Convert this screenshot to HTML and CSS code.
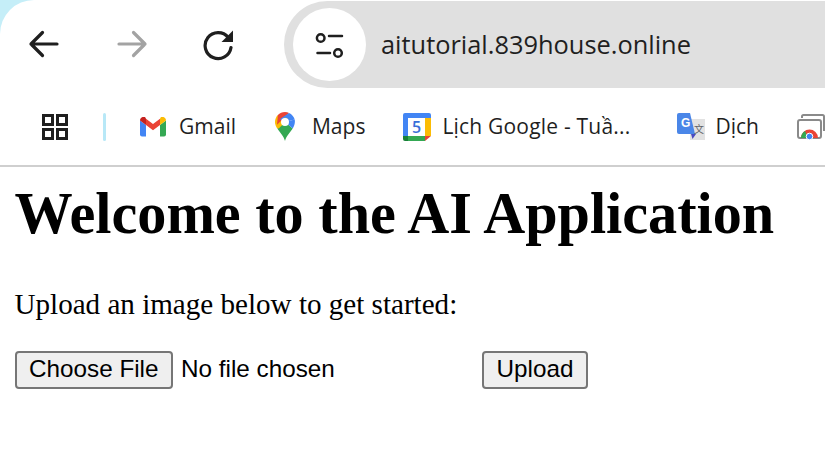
FILE: index.html
```html
<!doctype html>
<html>
<head>
<meta charset="UTF-8">
<title>Welcome to the AI Application</title>
<link rel="stylesheet" href="styles.css">
</head>
<body>
<div class="chrome">
	<div class="toolbar">
		<button class="nav_btn nav_back" type="button" aria-label="Back">
			<svg width="34" height="34" viewBox="0 0 34 34"><path d="M30 17H4M15.500 5.500 4 17l11.500 11.500" fill="none" stroke="#1f1f1f" stroke-width="3.200" stroke-linecap="round" stroke-linejoin="round"/></svg>
		</button>
		<button class="nav_btn nav_forward" type="button" aria-label="Forward">
			<svg width="34" height="34" viewBox="0 0 34 34"><path d="M4 17h26M18.500 5.500 30 17 18.500 28.500" fill="none" stroke="#a3a3a3" stroke-width="3.200" stroke-linecap="round" stroke-linejoin="round"/></svg>
		</button>
		<button class="nav_btn nav_reload" type="button" aria-label="Reload">
			<svg width="34" height="34" viewBox="0 0 34 34"><path d="M26.300 10.500A13 13 0 1 0 29 20.500" fill="none" stroke="#1f1f1f" stroke-width="3.200" stroke-linecap="round"/><path d="M31 3.500V15H19.500z" fill="#1f1f1f"/></svg>
		</button>
		<div class="omnibox">
			<span class="site_info">
				<svg width="30" height="30" viewBox="1 0 30 30"><circle cx="6.700" cy="8" r="3.800" fill="none" stroke="#1f1f1f" stroke-width="2.500"/><path d="M15 6h13M3.500 23H16" stroke="#1f1f1f" stroke-width="2.500" stroke-linecap="round"/><circle cx="24" cy="23" r="3.800" fill="none" stroke="#1f1f1f" stroke-width="2.500"/></svg>
			</span>
			<span class="url">aitutorial.839house.online</span>
		</div>
	</div>
	<div class="bookmarks">
		<span class="apps_icon">
			<svg width="26" height="26" viewBox="0 0 26 26"><path d="M1.500 1.500h9v9h-9zM15.500 1.500h9v9h-9zM1.500 15.500h9v9h-9zM15.500 15.500h9v9h-9z" fill="none" stroke="#1f1f1f" stroke-width="3"/></svg>
		</span>
		<span class="bm_sep"></span>
		<a class="bm bm_gmail">
			<svg width="26" height="20" viewBox="0 0 26 20"><path d="M0 3.500V17.500A2 2 0 0 0 2 19.500H6V8z" fill="#4285f4"/><path d="M20 8V19.500h4a2 2 0 0 0 2-2V3.500z" fill="#34a853"/><path d="M6 8V1.800L13 7l7-5.200V8l-7 5.200z" fill="#ea4335"/><path d="M0 3.500C0 .8 3-.8 5-.1L6 1.800V8z" fill="#c5221f"/><path d="M20 1.800 21 -.1C23-.8 26 .8 26 3.500L20 8z" fill="#fbbc04"/></svg>
			<span class="bm_label">Gmail</span>
		</a>
		<a class="bm bm_maps">
			<svg width="20" height="29" viewBox="0 0 20 29"><path d="M10 29C8.800 24 5 20.500 2.300 16.500L10 10l7.700 6.500C15 20.500 11.200 24 10 29z" fill="#34a853"/><path d="M2.300 16.500C.8 14.500 0 12.300 0 10 0 7.300 1 5 2.900 3L10 10z" fill="#fbbc04"/><path d="M2.900 3C4.700 1.100 7.200 0 10 0c1.500 0 2.800.3 4 .9L2 13z" fill="#ea4335"/><path d="M14 .9C16.700 2 19 4.600 19.700 7.500L10 10 5 7z" fill="#4285f4"/><path d="M19.700 7.500C20.300 10.500 19.500 13.500 17.700 16.500L10 10z" fill="#4285f4"/><path d="M2 13 10 5.500l3 1.500-9.500 9.800z" fill="#fbbc04"/><circle cx="10" cy="10" r="4" fill="#fff"/></svg>
			<span class="bm_label">Maps</span>
		</a>
		<a class="bm bm_cal">
			<svg width="28" height="28" viewBox="0 0 28 28"><path d="M2 0h24a2 2 0 0 1 2 2v4h-6V5H5v18H0V2a2 2 0 0 1 2-2z" fill="#4285f4"/><path d="M22 5h6v18h-6z" fill="#fbbc04"/><path d="M5 23h17v5H5z" fill="#34a853"/><path d="M0 23h5v5H2a2 2 0 0 1-2-2z" fill="#188038"/><path d="M22 23h6l-6 5z" fill="#ea4335"/><text x="13.500" y="20" class="cal_day">5</text></svg>
			<span class="bm_label cal_label">Lịch Google - Tuầ...</span>
		</a>
		<a class="bm bm_dich">
			<svg width="28" height="28" viewBox="0 0 28 28"><path d="M13 6h15v21H13z" fill="#e2e2e2"/><path d="M2 0h11l5 21H2a2 2 0 0 1-2-2V2a2 2 0 0 1 2-2z" fill="#4a86e8"/><path d="M14 21h5l-3.500 5z" fill="#4a4ac0"/><text x="4" y="14" class="g_letter">G</text><text x="17" y="20" class="x_letter">文</text></svg>
			<span class="bm_label">Dịch</span>
		</a>
		<a class="bm bm_more">
			<svg width="28" height="26" viewBox="0 0 28 26"><path d="M5 4V2.500A1.500 1.500 0 0 1 6.500 1h19A1.500 1.500 0 0 1 27 2.500V17" fill="none" stroke="#8a8a8a" stroke-width="2"/><rect x="1" y="6" width="23" height="18" rx="2" fill="#fff" stroke="#8a8a8a" stroke-width="2"/><path d="M4 24a8.500 8.500 0 0 1 17 0z" fill="#ea4335"/><path d="M4 24a8.500 8.500 0 0 1 4-7l3 7z" fill="#34a853"/><circle cx="12.500" cy="22.500" r="3.300" fill="#4285f4" stroke="#fff"/></svg>
		</a>
	</div>
</div>
<div class="page">
	<h1>Welcome to the AI Application</h1>
	<p>Upload an image below to get started:</p>
	<form class="upload_form">
		<button class="form_btn" type="button">Choose File</button>
		<span class="file_status">No file chosen</span>
		<button class="form_btn" type="submit">Upload</button>
	</form>
</div>
</body>
</html>
```

FILE: styles.css
```css
html{background:#fff}
body{margin:0;overflow:hidden;background:#fff}
.chrome{
	background:#c5eef8;
	border-bottom:2px solid #cfcfcf;
	font-family:"Open Sans","Noto Sans",sans-serif;
	color:#1f1f1f;
}
.toolbar{
	display:flex;
	align-items:center;
	height:88px;
	background:#fff;
	border-top-left-radius:34px;
	overflow:hidden;
}
.nav_btn{
	display:flex;
	padding:0;
	border:0;
	background:none;
}
.nav_back{margin-left:27px}
.nav_forward{margin-left:54px}
.nav_reload{margin-left:53px}
.omnibox{
	display:flex;
	align-items:center;
	flex:1;
	height:87px;
	margin:1px -60px 0 48px;
	padding-left:9px;
	background:#e0e0e0;
	border-radius:44px 0 0 44px;
}
.site_info{
	display:flex;
	align-items:center;
	justify-content:center;
	width:73px;
	height:73px;
	border-radius:50%;
	background:#fff;
}
.url{
	margin-left:15px;
	padding-bottom:2px;
	font-size:25.400px;
}
.bookmarks{
	display:flex;
	align-items:center;
	height:77px;
	background:#fff;
	overflow:hidden;
}
.apps_icon{display:flex;margin-left:42px}
.bm_sep{
	width:3px;
	height:28px;
	margin-left:35px;
	border-radius:2px;
	background:#b8e8f7;
}
.bm{
	display:flex;
	align-items:center;
	font-size:21px;
	flex:none;
}
.bm svg{flex:none}
.bm_label{padding-bottom:2px}
.cal_label{letter-spacing:.2px}
.bm_gmail{margin-left:34px;gap:13px}
.bm_maps{margin-left:39px;gap:17px}
.bm_cal{margin-left:38px;gap:11px}
.bm_dich{margin-left:47px;gap:10px}
.bm_more{margin-left:38px}
.cal_day{
	fill:#3a6fd8;
	font-family:"Open Sans",sans-serif;
	font-size:16px;
	font-weight:600;
	text-anchor:middle;
}
.g_letter{
	fill:#fff;
	font-family:"Liberation Sans",sans-serif;
	font-size:12px;
	font-weight:bold;
}
.x_letter{
	fill:#5f6368;
	font-family:"Noto Sans CJK SC",sans-serif;
	font-size:10px;
}
.page{
	padding:0 14.500px;
	font-family:"Liberation Serif",serif;
	color:#000;
}
h1{
	margin:12px 0 0;
	font-size:58.200px;
	line-height:70px;
	white-space:nowrap;
}
p{
	margin:39px 0 0;
	font-size:29.100px;
	line-height:33px;
}
.upload_form{
	display:flex;
	align-items:center;
	margin-top:30px;
	font-family:"Liberation Sans",sans-serif;
	font-size:24.270px;
}
.form_btn{
	height:38px;
	padding:0 12.500px 2px;
	border:2px solid #767676;
	border-radius:4px;
	background:#efefef;
	color:#000;
	font:inherit;
}
.file_status{
	width:301px;
	margin-left:8px;
	padding-bottom:2px;
}
```
